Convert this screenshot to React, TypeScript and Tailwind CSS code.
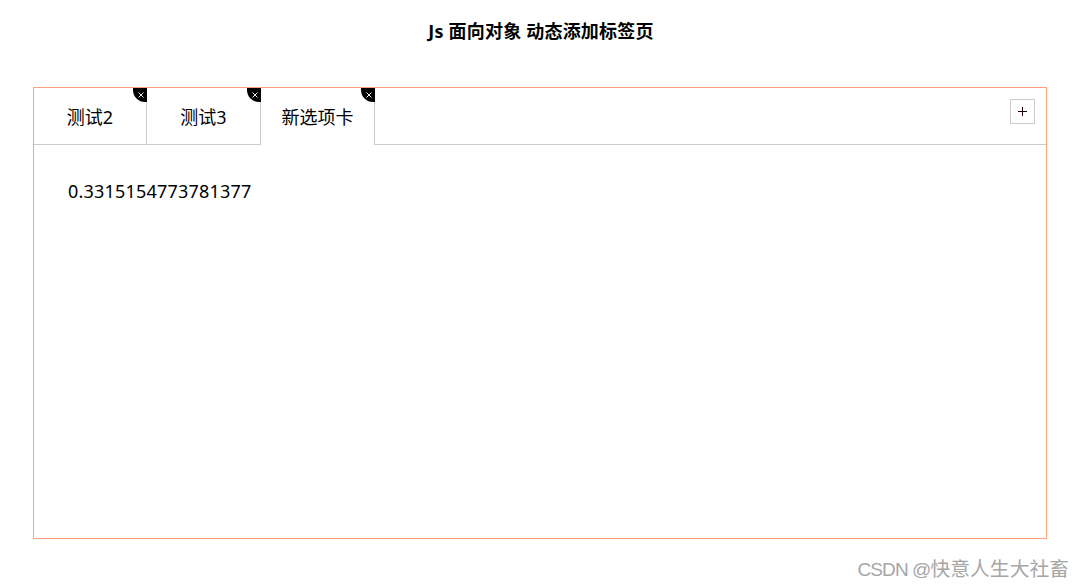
const font = { fontFamily: '"Noto Sans", "Noto Sans CJK SC", sans-serif' }

const tabs = [
  { title: '测试2', active: false, width: 'w-[113px]' },
  { title: '测试3', active: false, width: 'w-[114px]' },
  { title: '新选项卡', active: true, width: 'w-[114px]' },
]

function Tab({ title, active, width }: { title: string; active: boolean; width: string }) {
  return (
    <li
      className={`relative flex h-[56px] items-center justify-center border-r border-[#cccccc] text-[18px] text-black ${width} ${
        active ? 'z-10 -mb-px h-[57px] bg-white' : ''
      }`}
    >
      <span className="mt-[2px]">{title}</span>
      <span className="absolute -right-px top-0 flex h-[14px] w-[14px] items-center justify-center rounded-bl-[12px] bg-black">
        <svg width="6" height="6" viewBox="0 0 6 6" className="ml-[1px] -mt-[1px]" aria-hidden="true">
          <path d="M0.5 0.5L5.5 5.5M5.5 0.5L0.5 5.5" stroke="#e8e8e8" strokeWidth="1" />
        </svg>
      </span>
    </li>
  )
}

export default function App() {
  return (
    <div className="relative h-[588px] w-[1084px] overflow-hidden bg-white" style={font}>
      <h1 className="flex h-[87px] justify-center pt-[18px] pr-[2px] text-[18px] leading-[26px] font-bold tracking-[0.2px] whitespace-pre text-black">
        Js 面向对象 动态添加标签页
      </h1>
      <div className="mx-[33px] flex h-[452px] w-[1014px] flex-col border border-[#ffa07a]">
        <div className="flex h-[57px] shrink-0 items-start justify-between border-b border-[#cccccc]">
          <ul className="flex">
            {tabs.map((t) => (
              <Tab key={t.title} {...t} />
            ))}
          </ul>
          <button
            type="button"
            className="mt-[11px] mr-[11px] flex h-[25px] w-[25px] items-center justify-center border border-[#cccccc] bg-white"
          >
            <svg width="9" height="9" viewBox="0 0 9 9" aria-hidden="true">
              <path d="M4.5 0V9M0 4.5H9" stroke="#200000" strokeWidth="1" />
            </svg>
          </button>
        </div>
        <div className="pl-[34px] pt-[32px] text-[18px] leading-[28px] tracking-[0.2px] text-black">0.3315154773781377</div>
      </div>
      <div className="absolute right-[15px] bottom-[6px] flex items-baseline leading-[24px] text-[#a6a6a6]">
        <span
          className="text-[19px] tracking-[-0.9px] whitespace-pre"
          style={{ fontFamily: '"Liberation Sans", sans-serif' }}
        >
          CSDN @
        </span>
        <span className="text-[19.8px]">快意人生大社畜</span>
      </div>
    </div>
  )
}
